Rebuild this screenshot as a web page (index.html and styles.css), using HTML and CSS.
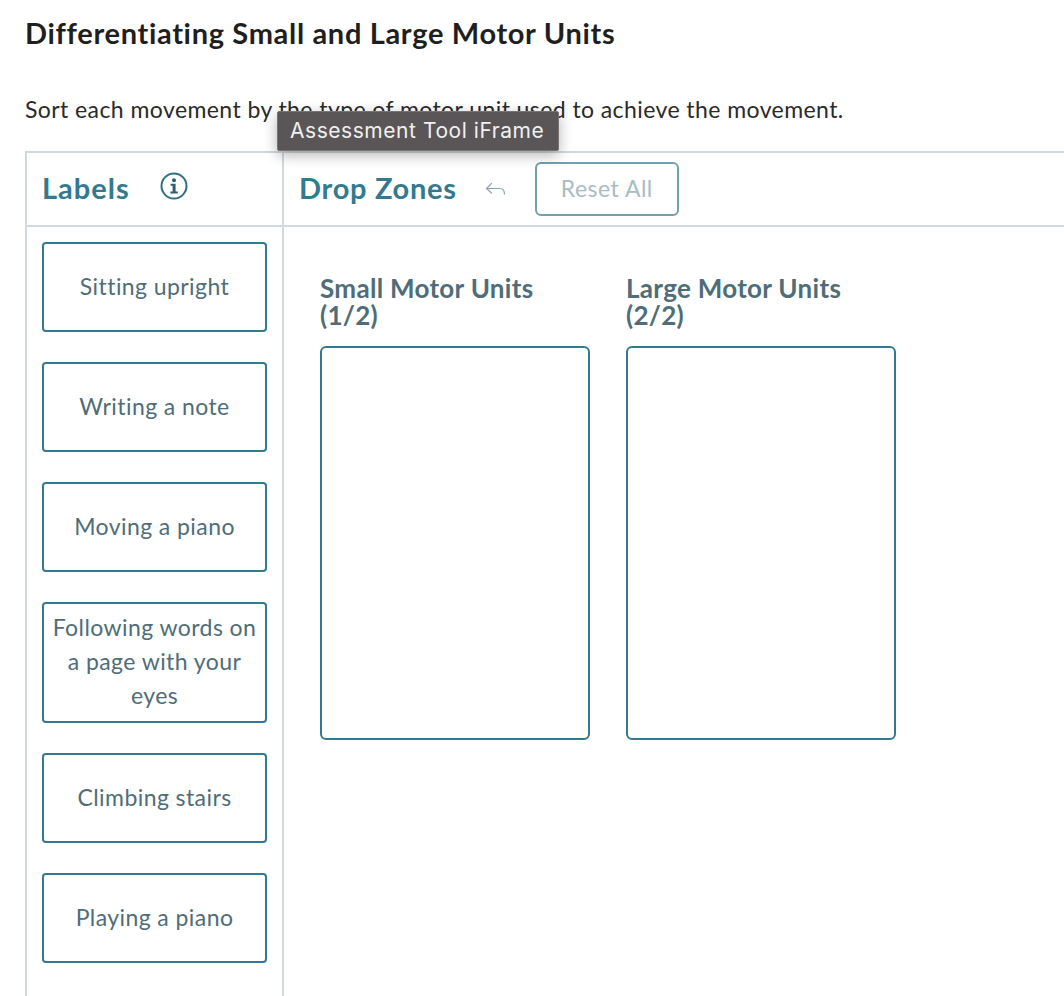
FILE: index.html
```html
<!DOCTYPE html>
<html lang="en">
<head>
<meta charset="utf-8">
<title>Differentiating Small and Large Motor Units</title>
<link rel="stylesheet" href="styles.css">
</head>
<body>
<main class="page">
  <h1 class="title">Differentiating Small and Large Motor Units</h1>
  <p class="intro">Sort each movement by the type of motor unit used to achieve the movement.</p>
  <section class="activity">
    <aside class="labels-col">
      <header class="col-head labels-head">
        <h2 class="col-title labels-title">Labels</h2>
        <svg class="info" viewBox="0 0 28 28" aria-label="Information">
          <circle cx="14" cy="14" r="12.5" fill="none" stroke="#2f6f83" stroke-width="2"/>
          <circle cx="14" cy="8.2" r="2" fill="#2f5f70"/>
          <path d="M10.6 11.8h5v7.8h2.2v2h-7.4v-2h2.2v-5.8h-2z" fill="#2f5f70"/>
        </svg>
      </header>
      <div class="label-list">
        <div class="label">Sitting upright</div>
        <div class="label">Writing a note</div>
        <div class="label">Moving a piano</div>
        <div class="label">Following words on a page with your eyes</div>
        <div class="label">Climbing stairs</div>
        <div class="label">Playing a piano</div>
      </div>
    </aside>
    <div class="zones-col">
      <header class="col-head zones-head">
        <h2 class="col-title">Drop Zones</h2>
        <svg class="undo" viewBox="0 0 22 14" aria-label="Undo">
          <path d="M6.5 1.5 1.5 6.5l5 4.5M1.5 6.5h13c3 0 5 1.8 5 5.5" fill="none" stroke="#8fa5ae" stroke-width="1.2" stroke-linecap="round" stroke-linejoin="round"/>
        </svg>
        <button class="reset" type="button">Reset All</button>
      </header>
      <div class="zones">
        <div class="zone">
          <h3 class="zone-title">Small Motor Units<br>(1/2)</h3>
          <div class="zone-box"></div>
        </div>
        <div class="zone">
          <h3 class="zone-title">Large Motor Units<br>(2/2)</h3>
          <div class="zone-box"></div>
        </div>
      </div>
    </div>
    <div class="tooltip">Assessment Tool iFrame</div>
  </section>
</main>
</body>
</html>
```
FILE: styles.css
```css
html, body {
  margin: 0;
  padding: 0;
  height: 996px;
  overflow: hidden;
  background: #fff;
}
body {
  font-family: Lato, "Open Sans", "Liberation Sans", sans-serif;
  color: #222;
}
.page {
  padding: 16px 0 0 25px;
  width: 1100px;
}
.title {
  margin: 0;
  font-size: 29px;
  line-height: 34px;
  font-weight: 700;
  letter-spacing: 0.67px;
  color: #1f1f1f;
}
.intro {
  margin: 45px 0 0;
  font-size: 23px;
  line-height: 28px;
  letter-spacing: 0.42px;
  color: #2a2a2a;
}
.activity {
  position: relative;
  display: flex;
  margin-top: 28px;
  height: 843px;
  border-top: 2px solid #d2d9dd;
  border-left: 2px solid #d2d9dd;
}
.labels-col {
  width: 255px;
  flex: none;
  border-right: 2px solid #d2d9dd;
}
.zones-col {
  flex: 1;
}
.col-head {
  display: flex;
  align-items: center;
  height: 72px;
  border-bottom: 2px solid #d2d9dd;
}
.labels-head { padding-left: 15px; }
.zones-head { padding-left: 15px; }
.col-title {
  margin: 0;
  font-size: 29px;
  line-height: 34px;
  font-weight: 700;
  color: #337a90;
  letter-spacing: 0.72px;
  position: relative;
  top: -1px;
}
.labels-title { letter-spacing: 1px; }
.info {
  width: 28px;
  height: 28px;
  margin-left: 30px;
  margin-top: -6px;
}
.undo {
  width: 22px;
  height: 14px;
  margin-left: 28px;
}
.reset {
  margin-left: 28px;
  width: 144px;
  height: 54px;
  box-sizing: border-box;
  border: 2px solid #73a0ae;
  border-radius: 6px;
  background: #fff;
  color: #a9bcc3;
  font-family: inherit;
  font-size: 23px;
  letter-spacing: 0.5px;
  padding: 0 0 2px;
}
.label-list {
  display: flex;
  flex-direction: column;
  gap: 30px;
  padding: 15px 15px 0;
}
.label {
  box-sizing: border-box;
  width: 225px;
  min-height: 90px;
  display: flex;
  align-items: center;
  justify-content: center;
  text-align: center;
  padding: 6px 5px 9px;
  border: 2px solid #337a90;
  border-radius: 4px;
  font-size: 23px;
  line-height: 34px;
  letter-spacing: 0.42px;
  color: #4f6d79;
}
.zones {
  display: flex;
  gap: 36px;
  padding: 48px 0 0 36px;
}
.zone { width: 270px; }
.zone-title {
  margin: 0 0 17px;
  font-size: 26px;
  line-height: 27px;
  font-weight: 700;
  letter-spacing: 0.3px;
  color: #4f6d79;
}
.zone-box {
  box-sizing: border-box;
  height: 394px;
  border: 2px solid #337a90;
  border-radius: 6px;
}
.tooltip {
  position: absolute;
  left: 250px;
  top: -42px;
  width: 282px;
  height: 40px;
  box-sizing: border-box;
  padding-left: 12px;
  background: #5a5556;
  border: 1px solid #787474;
  border-radius: 2px;
  box-shadow: 0 4px 14px rgba(0, 0, 0, 0.3);
  color: #f1f0f0;
  font-family: Inter, Roboto, sans-serif;
  font-size: 21px;
  line-height: 38px;
  letter-spacing: 0.55px;
  white-space: nowrap;
}
```
